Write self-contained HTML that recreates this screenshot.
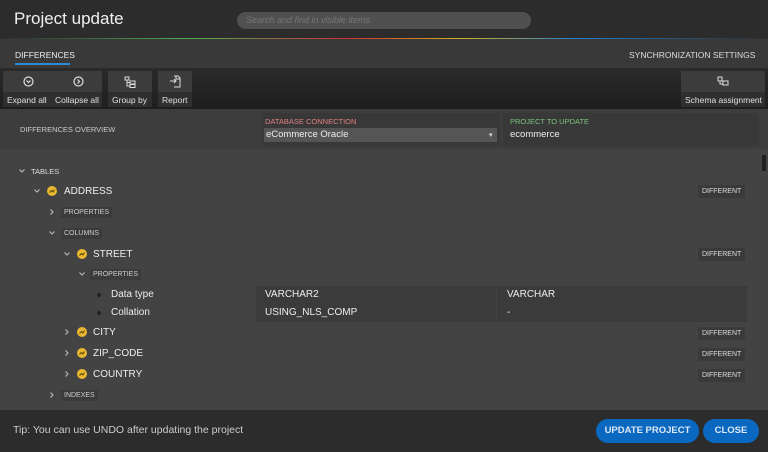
<!DOCTYPE html>
<html><head><meta charset="utf-8"><style>
*{margin:0;padding:0;box-sizing:border-box}
body{width:768px;height:452px;overflow:hidden;background:#434343;font-family:"Liberation Sans",sans-serif;color:#ddd;position:relative}
.a{position:absolute;white-space:nowrap}
.hdr{left:0;top:0;width:768px;height:38px;background:#2c2c2c}
.grad{left:0;top:38px;width:768px;height:1px;background:linear-gradient(90deg,#2c2c2c 0%,#4caf50 25%,#d03030 45%,#d0b020 60%,#2080d0 75%,#2c2c2c 100%)}
.tabs{left:0;top:39px;width:768px;height:29px;background:#393939}
.tb{left:0;top:68px;width:768px;height:41px;background:linear-gradient(#2a2a2a,#1e1e1e)}
.btn{background:#2f2f2f;top:71px;height:36px}
.btn .t{position:absolute;left:0;right:0;top:0;height:21px;background:#3c3c3c}
.btn .l{position:absolute;top:24px;font-size:8.5px;color:#e0e0e0}
.ov{left:0;top:109px;width:768px;height:40px;background:#3d3d3d}
.sm{font-size:7.5px;color:#ccc}
.node{font-size:10px;color:#eee}
.lab{font-size:7px;color:#ccc;background:#3b3b3b;padding:2px 3px}
.ic{width:10px;height:10px}
.diff{font-size:7px;color:#ddd;background:#3a3a3a;padding:3px 4px;left:698px}
.row{left:256px;width:491px;height:18px;background:#3b3b3b}
.foot{left:0;top:410px;width:768px;height:42px;background:#2c2c2c}
.pb{background:#0a68c0;color:#dfe8f5;font-size:9.5px;font-weight:bold;height:24px;top:419px;border-radius:12px;text-align:center;line-height:24px}
</style></head><body>
<svg width="0" height="0" style="position:absolute"><defs>
<symbol id="d" viewBox="0 0 8 8"><path d="M1.5 2.5l2.5 2.5 2.5-2.5" fill="none" stroke="#bbb" stroke-width="1.1"/></symbol>
<symbol id="r" viewBox="0 0 8 8"><path d="M2.5 1.5l2.5 2.5-2.5 2.5" fill="none" stroke="#bbb" stroke-width="1.1"/></symbol>
<symbol id="i" viewBox="0 0 10 10"><circle cx="5" cy="5" r="5" fill="#e8b830"/><path d="M2.5 6.5l2-2 1.5 1.5 1.5-2.5" fill="none" stroke="#5a4410" stroke-width="1"/></symbol>
</defs></svg>
<div class="a hdr"></div>
<div class="a" style="left:14px;top:9px;font-size:17px;color:#f0f0f0">Project update</div>
<div class="a" style="left:237px;top:12px;width:294px;height:17px;border-radius:9px;background:#505050"></div>
<div class="a" style="left:246px;top:15px;font-size:9px;font-style:italic;color:#777">Search and find in visible items</div>
<div class="a grad"></div>
<div class="a tabs"></div>
<div class="a" style="left:15px;top:50px;font-size:8.5px;color:#eee">DIFFERENCES</div>
<div class="a" style="left:15px;top:63px;width:55px;height:2px;background:#2a8ad8"></div>
<div class="a" style="left:629px;top:50px;font-size:8.5px;color:#ddd">SYNCHRONIZATION SETTINGS</div>
<div class="a tb"></div>
<div class="a btn" style="left:3px;width:99px"><div class="t"></div><span class="l" style="left:4px">Expand all</span><span class="l" style="left:52px">Collapse all</span>
<svg class="a" style="left:20px;top:5px" width="11" height="11"><circle cx="5.5" cy="5.5" r="4.5" fill="none" stroke="#ddd" stroke-width="1.2"/><path d="M3.5 4.5l2 2 2-2" fill="none" stroke="#ddd" stroke-width="1.2"/></svg>
<svg class="a" style="left:70px;top:5px" width="11" height="11"><circle cx="5.5" cy="5.5" r="4.5" fill="none" stroke="#ddd" stroke-width="1.2"/><path d="M4.5 3.5l2 2-2 2" fill="none" stroke="#ddd" stroke-width="1.2"/></svg></div>
<div class="a btn" style="left:108px;width:44px"><div class="t"></div><span class="l" style="left:4px">Group by</span>
<svg class="a" style="left:16px;top:5px" width="12" height="12"><path d="M1 1h4v3H1zM3 4v6h3M3 6.5h3M6 5h5v3H6zM6 8.5h5v3H6z" fill="none" stroke="#ddd" stroke-width="1"/></svg></div>
<div class="a btn" style="left:158px;width:34px"><div class="t"></div><span class="l" style="left:4px">Report</span>
<svg class="a" style="left:11px;top:4px" width="12" height="13"><path d="M5 1h4l2 2v9H5M7 1v3h4M1 6h6M5 4l2 2-2 2" fill="none" stroke="#ddd" stroke-width="1"/></svg></div>
<div class="a btn" style="left:681px;width:84px"><div class="t"></div><span class="l" style="left:4px">Schema assignment</span>
<svg class="a" style="left:36px;top:5px" width="12" height="11"><path d="M1 1h4v4H1zM6 5h5v4H6zM3 5v3h3" fill="none" stroke="#ddd" stroke-width="1"/></svg></div>
<div class="a ov"></div>
<div class="a sm" style="left:20px;top:125px">DIFFERENCES OVERVIEW</div>
<div class="a" style="left:262px;top:113px;width:238px;height:33px;background:#383838"></div>
<div class="a" style="left:265px;top:117px;font-size:7.5px;color:#e08080">DATABASE CONNECTION</div>
<div class="a" style="left:264px;top:128px;width:233px;height:14px;background:#555"></div>
<div class="a" style="left:266px;top:129px;font-size:9.5px;color:#eee">eCommerce Oracle</div>
<div class="a" style="left:489px;top:131px;font-size:7px;color:#ddd">▾</div>
<div class="a" style="left:503px;top:113px;width:255px;height:33px;background:#383838"></div>
<div class="a" style="left:510px;top:117px;font-size:7.5px;color:#7cc47c">PROJECT TO UPDATE</div>
<div class="a" style="left:510px;top:129px;font-size:9.5px;color:#eee">ecommerce</div>
<div class="a" style="left:762px;top:155px;width:4px;height:16px;background:#222"></div>

<svg class="a" style="left:18px;top:167px" width="8" height="8"><use href="#d"/></svg><div class="a sm" style="left:31px;top:167px;color:#ddd">TABLES</div>
<svg class="a" style="left:33px;top:187px" width="8" height="8"><use href="#d"/></svg><svg class="a ic" style="left:47px;top:186px"><use href="#i"/></svg><div class="a node" style="left:64px;top:186px">ADDRESS</div><div class="a diff" style="top:185px">DIFFERENT</div>
<svg class="a" style="left:48px;top:208px" width="8" height="8"><use href="#r"/></svg><div class="a lab" style="left:61px;top:207px">PROPERTIES</div>
<svg class="a" style="left:48px;top:229px" width="8" height="8"><use href="#d"/></svg><div class="a lab" style="left:61px;top:228px">COLUMNS</div>
<svg class="a" style="left:63px;top:250px" width="8" height="8"><use href="#d"/></svg><svg class="a ic" style="left:77px;top:249px"><use href="#i"/></svg><div class="a node" style="left:93px;top:249px">STREET</div><div class="a diff" style="top:248px">DIFFERENT</div>
<svg class="a" style="left:78px;top:270px" width="8" height="8"><use href="#d"/></svg><div class="a lab" style="left:90px;top:269px">PROPERTIES</div>
<div class="a row" style="top:286px"></div><div class="a row" style="top:304px"></div>
<div class="a" style="left:496px;top:286px;width:1px;height:36px;background:#444"></div>
<div class="a" style="left:97px;top:293px;width:4px;height:4px;border-radius:50%;background:#222"></div><div class="a node" style="left:111px;top:289px">Data type</div>
<div class="a node" style="left:265px;top:289px">VARCHAR2</div><div class="a node" style="left:507px;top:289px">VARCHAR</div>
<div class="a" style="left:97px;top:311px;width:4px;height:4px;border-radius:50%;background:#222"></div><div class="a node" style="left:111px;top:307px">Collation</div>
<div class="a node" style="left:265px;top:307px">USING_NLS_COMP</div><div class="a node" style="left:507px;top:307px">-</div>
<svg class="a" style="left:63px;top:328px" width="8" height="8"><use href="#r"/></svg><svg class="a ic" style="left:77px;top:327px"><use href="#i"/></svg><div class="a node" style="left:93px;top:327px">CITY</div><div class="a diff" style="top:327px">DIFFERENT</div>
<svg class="a" style="left:63px;top:349px" width="8" height="8"><use href="#r"/></svg><svg class="a ic" style="left:77px;top:348px"><use href="#i"/></svg><div class="a node" style="left:93px;top:348px">ZIP_CODE</div><div class="a diff" style="top:348px">DIFFERENT</div>
<svg class="a" style="left:63px;top:370px" width="8" height="8"><use href="#r"/></svg><svg class="a ic" style="left:77px;top:369px"><use href="#i"/></svg><div class="a node" style="left:93px;top:369px">COUNTRY</div><div class="a diff" style="top:369px">DIFFERENT</div>
<svg class="a" style="left:48px;top:391px" width="8" height="8"><use href="#r"/></svg><div class="a lab" style="left:61px;top:390px">INDEXES</div>

<div class="a foot"></div>
<div class="a" style="left:13px;top:424px;font-size:10.5px;color:#ccc">Tip: You can use UNDO after updating the project</div>
<div class="a pb" style="left:596px;width:103px">UPDATE PROJECT</div>
<div class="a pb" style="left:703px;width:56px">CLOSE</div>
</body></html>
